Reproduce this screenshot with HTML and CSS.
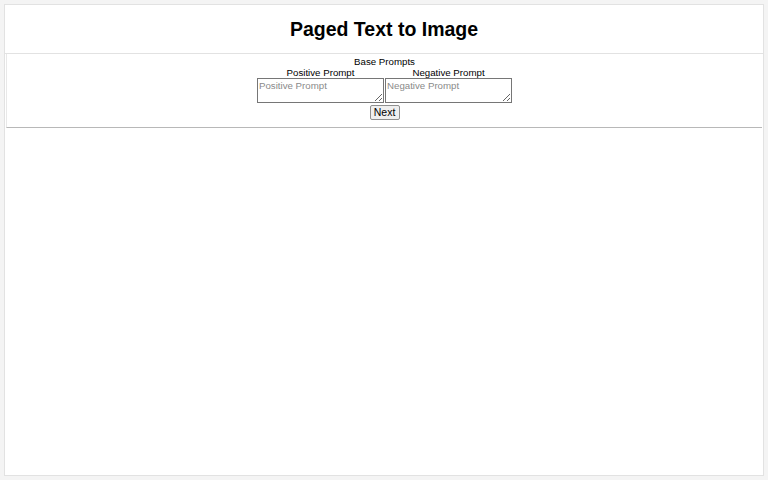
FILE: index.html
```html
<!DOCTYPE html>
<html>
<head>
<meta charset="utf-8">
<title>Paged Text to Image</title>
<link rel="stylesheet" href="styles.css">
</head>
<body>
<div class="card">
  <header class="header"><h1 class="title">Paged Text to Image</h1></header>
  <section class="panel">
    <div class="panel-title">Base Prompts</div>
    <div class="prompts">
      <div class="prompt-col">
        <label class="prompt-label">Positive Prompt</label>
        <textarea class="prompt-input" placeholder="Positive Prompt"></textarea>
      </div>
      <div class="prompt-col">
        <label class="prompt-label">Negative Prompt</label>
        <textarea class="prompt-input" placeholder="Negative Prompt"></textarea>
      </div>
    </div>
    <button class="next-btn">Next</button>
  </section>
</div>
</body>
</html>
```

FILE: styles.css
```css
html, body {
  margin: 0;
  padding: 0;
}
body {
  background: #f4f4f4;
  font-family: "Liberation Sans", Arial, sans-serif;
  padding: 4px;
  height: 480px;
  box-sizing: border-box;
}
.card {
  background: #ffffff;
  border: 1px solid #e2e2e2;
  height: 472px;
  box-sizing: border-box;
  display: flex;
  flex-direction: column;
}
.header {
  height: 48px;
  display: flex;
  align-items: center;
  justify-content: center;
  border-bottom: 1px solid #e2e2e2;
}
.title {
  margin: 0;
  font-size: 19.5px;
  font-weight: bold;
  color: #000;
}
.panel {
  margin: 0 1px;
  border-left: 1px solid #e8e8e8;
  border-bottom: 1px solid #b8b8b8;
  padding: 2px 0 7px;
  display: flex;
  flex-direction: column;
  align-items: center;
  font-size: 9.7px;
  line-height: 11px;
  color: #000;
}
.panel-title {
  height: 11px;
}
.prompts {
  display: flex;
  gap: 1px;
}
.prompt-col {
  display: flex;
  flex-direction: column;
  align-items: center;
}
.prompt-label {
  height: 11px;
}
.prompt-input {
  width: 127px;
  height: 25px;
  box-sizing: border-box;
  margin: 0;
  padding: 1px;
  border: 1px solid #767676;
  font-family: "Liberation Sans", Arial, sans-serif;
  font-size: 9.7px;
  line-height: 11px;
  resize: vertical;
}
.prompt-input::placeholder {
  color: #8a8a8a;
}
.next-btn {
  margin-top: 2px;
  width: 30px;
  height: 15px;
  padding: 0;
  font-family: "Liberation Sans", Arial, sans-serif;
  font-size: 10.5px;
  line-height: 13px;
  color: #000;
  background: #efefef;
  border: 1px solid #8f8f8f;
  border-radius: 2px;
}
```
